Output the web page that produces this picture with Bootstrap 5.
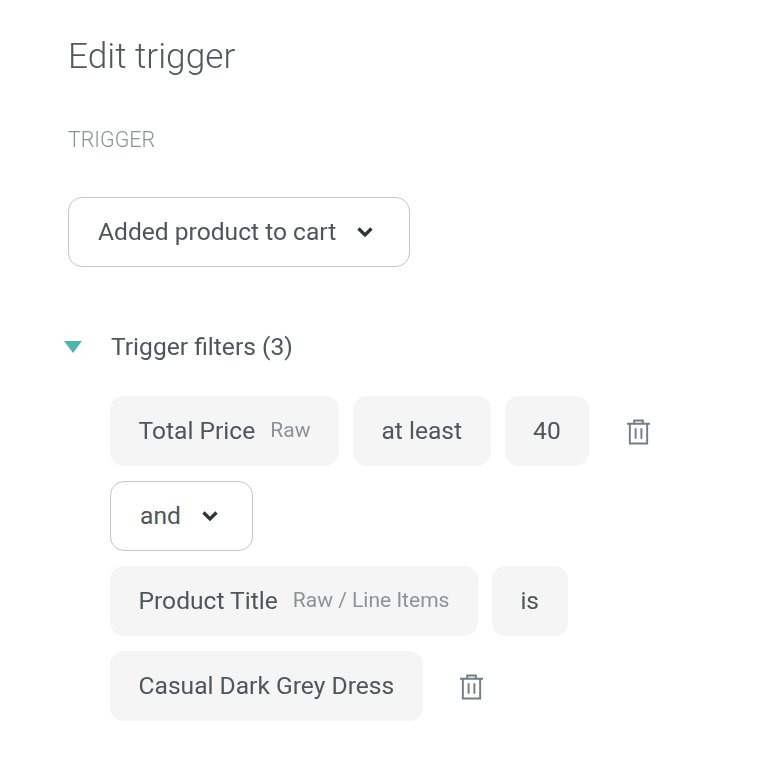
<!DOCTYPE html>
<html lang="en">
<head>
<meta charset="utf-8">
<title>Edit trigger</title>
<link rel="stylesheet" href="https://cdn.jsdelivr.net/npm/bootstrap@5.3.0/dist/css/bootstrap.min.css">
<style>
body { font-family: Roboto, "Liberation Sans", sans-serif; background: #fff; color: #505558; overflow: hidden; }
.page-wrap { padding: 29px 0 0 68px; width: 768px; height: 758px; filter: blur(.45px); }
.page-title { font-weight: 300; font-size: 35.2px; line-height: 54px; color: #53585c; margin: 0; }
.sec-label { font-size: 21.4px; line-height: 24px; color: #8b9299; margin: 45px 0 0; font-weight: 300; }
.sel-box { display: inline-flex; align-items: center; height: 70px; padding: 0 33px 0 29px; border: 1px solid #c4c6c8; border-radius: 14px; background: #fff; color: #505558; font-size: 24.6px; }
.sel-box svg { margin-left: 20px; }
.main-sel { margin-top: 45px; }
.main-sel .sel-box { padding-right: 35px; }
.filter-head { margin-top: 63px; font-size: 24.6px; line-height: 34px; }
.tri { width: 47px; margin-left: -4px; }
.filter-body { margin: 32px 0 0 42px; }
.chip { height: 70px; padding: 0 28.5px; background: #f5f5f5; border-radius: 14px; font-size: 24.6px; display: inline-flex; align-items: center; white-space: nowrap; }
.chip-sub { font-size: 21px; color: #8f9295; margin-left: 15px; }
.trash { margin-left: 22.5px; }
.filter-row { gap: 14px; margin-bottom: 15px; align-items: center; }
</style>
</head>
<body>
<div class="page-wrap">
  <h1 class="page-title">Edit trigger</h1>
  <div class="sec-label">TRIGGER</div>
  <div class="main-sel"><div class="sel-box">Added product to cart
    <svg width="18" height="12" viewBox="0 0 18 12"><path d="M2.5 2.500 9 9l6.500-6.500" fill="none" stroke="#2f3336" stroke-width="3.2"/></svg></div></div>
  <div class="filter-head d-flex align-items-center">
    <div class="tri"><svg width="18" height="12" viewBox="0 0 18 12" class="d-block"><path d="M0 0h18L9 12z" fill="#4db6ac"/></svg></div>
    <span>Trigger filters (3)</span>
  </div>
  <div class="filter-body">
    <div class="d-flex filter-row">
      <div class="chip">Total Price <span class="chip-sub">Raw</span></div>
      <div class="chip">at least</div>
      <div class="chip">40</div>
      <svg class="trash" width="25" height="27" viewBox="0 0 26 28" fill="none" stroke="#747c85" stroke-width="2"><path d="M1 6h24M8.500 6V2.500h9V6M4 6v20.500h18V6M10 10.500v11M16 10.500v11"/></svg>
    </div>
    <div class="d-flex filter-row"><div class="sel-box and-box">and
      <svg width="18" height="12" viewBox="0 0 18 12"><path d="M2.5 2.500 9 9l6.500-6.500" fill="none" stroke="#2f3336" stroke-width="3.2"/></svg></div></div>
    <div class="d-flex filter-row">
      <div class="chip">Product Title <span class="chip-sub">Raw / Line Items</span></div>
      <div class="chip">is</div>
    </div>
    <div class="d-flex filter-row">
      <div class="chip">Casual Dark Grey Dress</div>
      <svg class="trash" width="25" height="27" viewBox="0 0 26 28" fill="none" stroke="#747c85" stroke-width="2"><path d="M1 6h24M8.500 6V2.500h9V6M4 6v20.500h18V6M10 10.500v11M16 10.500v11"/></svg>
    </div>
  </div>
</div>
<script src="https://cdn.jsdelivr.net/npm/bootstrap@5.3.0/dist/js/bootstrap.bundle.min.js"></script>
</body>
</html>
